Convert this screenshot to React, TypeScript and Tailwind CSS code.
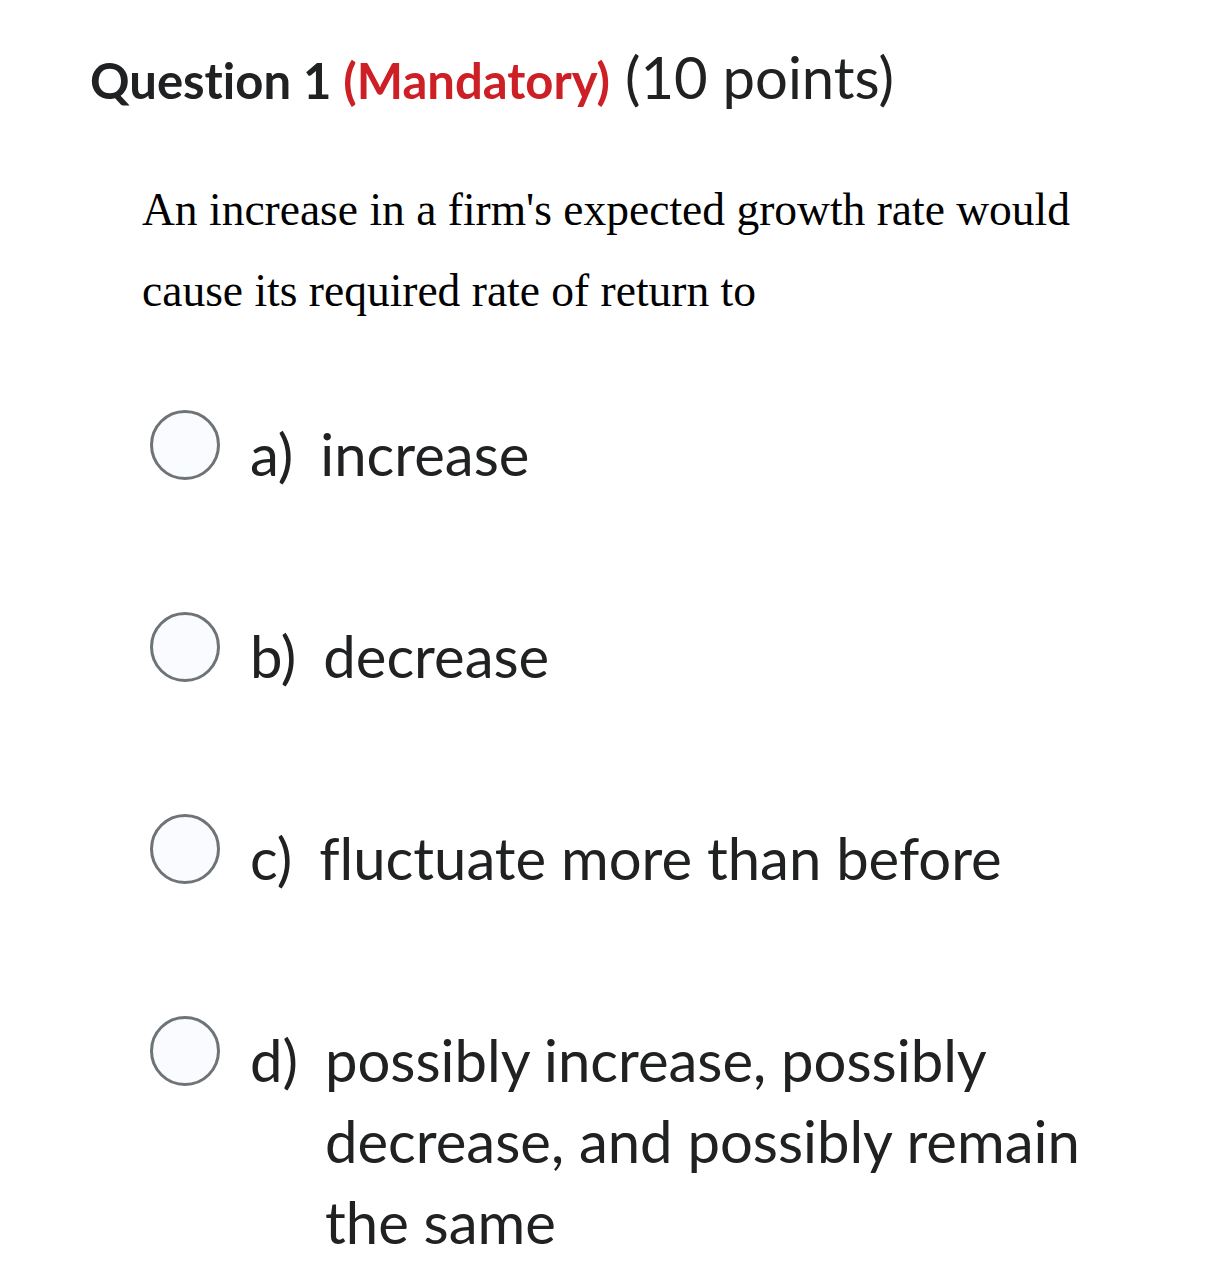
import React from "react";

const options = [
  { label: "a)", text: "increase" },
  { label: "b)", text: "decrease" },
  { label: "c)", text: "fluctuate more than before" },
  { label: "d)", text: "possibly increase, possibly decrease, and possibly remain the same" },
];

export default function App() {
  return (
    <div className="min-h-[1261px] w-[1206px] bg-white text-[#202122] [font-variant-ligatures:none]" style={{ fontFamily: "Lato, 'Noto Sans', sans-serif" }}>
      <div className="pl-[90px] pt-[45px]">
        <h1 className="text-[49px] leading-[64px] text-[#202122]">
          <span className="font-bold">Question 1 </span>
          <span className="font-bold text-[#cd2026]">(Mandatory)</span>
          <span className="font-normal text-[58px]"> (10 points)</span>
        </h1>
      </div>
      <div className="pl-[142px] pt-[57px] pr-[100px]">
        <p className="text-[45.5px] leading-[81px] text-black" style={{ fontFamily: "'Liberation Serif', 'Times New Roman', serif" }}>
          An increase in a firm's expected growth rate would cause its required rate of return to
        </p>
      </div>
      <div className="flex flex-col gap-[121px] pl-[150px] pt-[82px] pr-[110px]">
        {options.map((o) => (
          <div key={o.label} className="flex items-start">
            <div className="-mt-[3px] h-[70px] w-[70px] shrink-0 rounded-full border-[3px] border-[#6e7376] bg-[#f9fbff]" />
            <div className="ml-[30px] flex gap-[27px] text-[58px] leading-[81px]">
              <span>{o.label}</span>
              <span>{o.text}</span>
            </div>
          </div>
        ))}
      </div>
    </div>
  );
}
